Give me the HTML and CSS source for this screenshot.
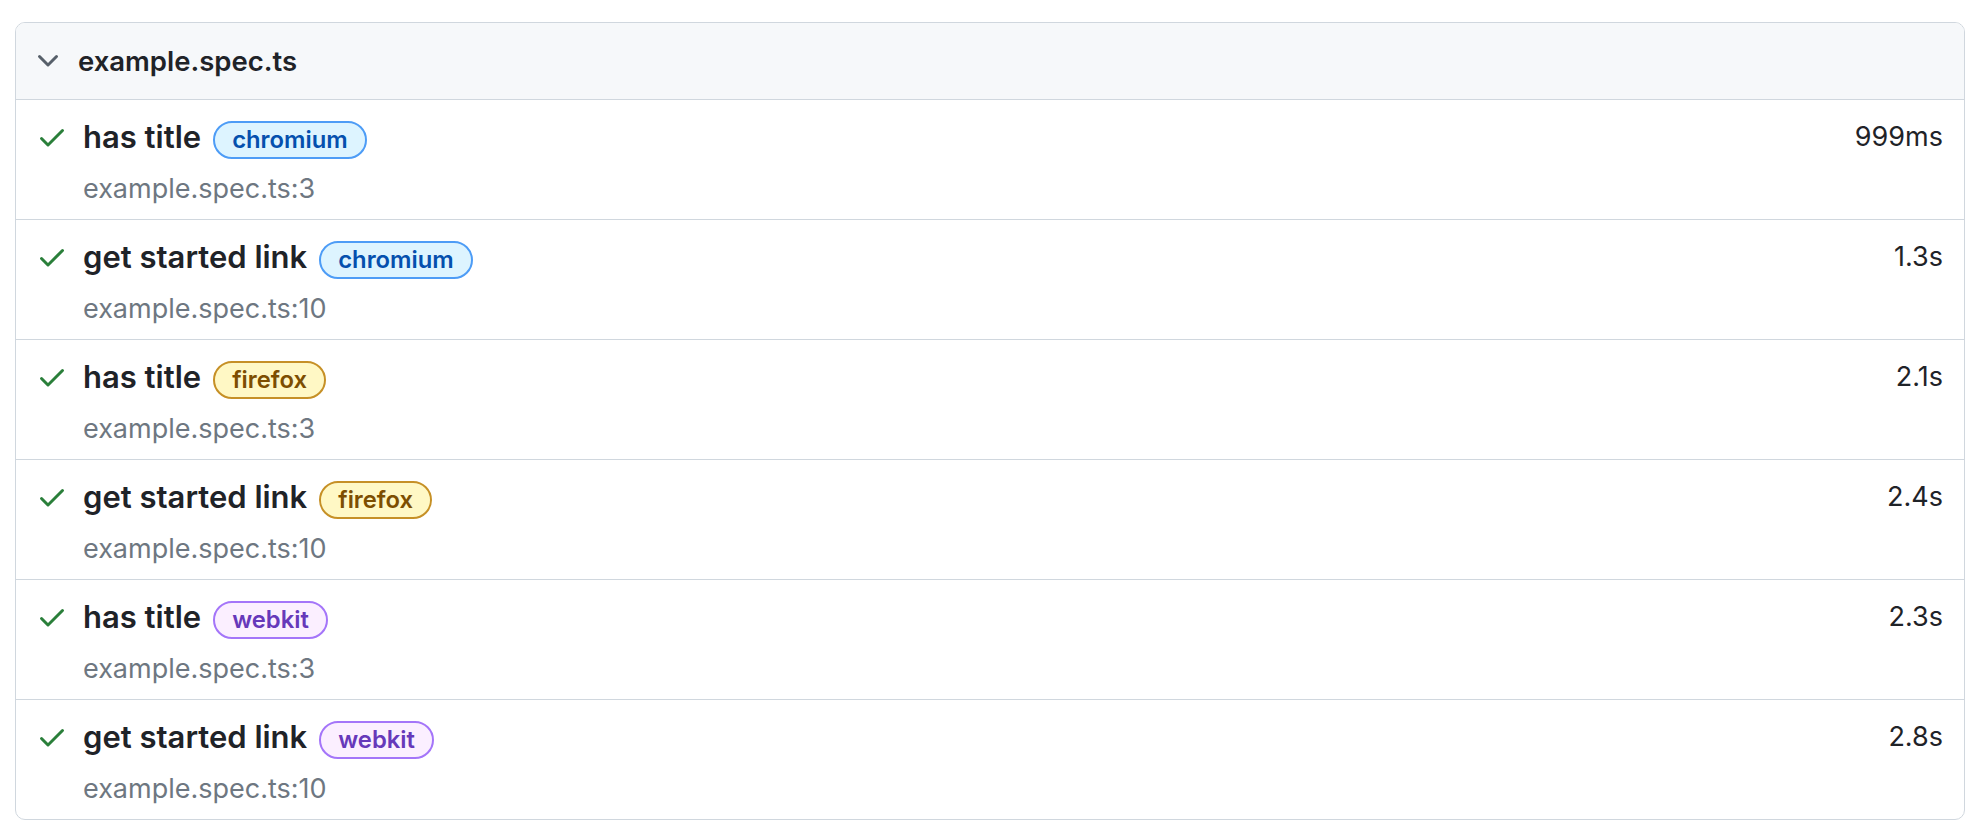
FILE: index.html
```html
<!DOCTYPE html>
<html>
<head>
<meta charset="utf-8">
<link rel="stylesheet" href="styles.css">
</head>
<body>
<div class="card">
  <div class="card-header">
    <svg class="chevron" viewBox="0 0 16 16" width="32" height="32"><path d="M12.78 5.22a.749.749 0 0 1 0 1.06l-4.25 4.25a.749.749 0 0 1-1.06 0L3.22 6.28a.749.749 0 1 1 1.06-1.06L8 8.939l3.72-3.719a.749.749 0 0 1 1.06 0Z"/></svg>
    <span class="file-name">example.spec.ts</span>
  </div>

  <div class="test-row">
    <svg class="check" viewBox="0 0 16 16" width="32" height="32"><path d="M13.78 4.22a.75.75 0 0 1 0 1.06l-7.25 7.25a.75.75 0 0 1-1.06 0L2.22 9.28a.751.751 0 0 1 .018-1.042.751.751 0 0 1 1.042-.018L6 10.94l6.72-6.72a.75.75 0 0 1 1.06 0Z"/></svg>
    <div class="test-main">
      <div class="test-line"><span class="test-title">has title</span><span class="label label-blue">chromium</span></div>
      <div class="test-location">example.spec.ts:3</div>
    </div>
    <div class="test-duration">999ms</div>
  </div>

  <div class="test-row">
    <svg class="check" viewBox="0 0 16 16" width="32" height="32"><path d="M13.78 4.22a.75.75 0 0 1 0 1.06l-7.25 7.25a.75.75 0 0 1-1.06 0L2.22 9.28a.751.751 0 0 1 .018-1.042.751.751 0 0 1 1.042-.018L6 10.94l6.72-6.72a.75.75 0 0 1 1.06 0Z"/></svg>
    <div class="test-main">
      <div class="test-line"><span class="test-title">get started link</span><span class="label label-blue">chromium</span></div>
      <div class="test-location">example.spec.ts:10</div>
    </div>
    <div class="test-duration">1.3s</div>
  </div>

  <div class="test-row">
    <svg class="check" viewBox="0 0 16 16" width="32" height="32"><path d="M13.78 4.22a.75.75 0 0 1 0 1.06l-7.25 7.25a.75.75 0 0 1-1.06 0L2.22 9.28a.751.751 0 0 1 .018-1.042.751.751 0 0 1 1.042-.018L6 10.94l6.72-6.72a.75.75 0 0 1 1.06 0Z"/></svg>
    <div class="test-main">
      <div class="test-line"><span class="test-title">has title</span><span class="label label-yellow">firefox</span></div>
      <div class="test-location">example.spec.ts:3</div>
    </div>
    <div class="test-duration">2.1s</div>
  </div>

  <div class="test-row">
    <svg class="check" viewBox="0 0 16 16" width="32" height="32"><path d="M13.78 4.22a.75.75 0 0 1 0 1.06l-7.25 7.25a.75.75 0 0 1-1.06 0L2.22 9.28a.751.751 0 0 1 .018-1.042.751.751 0 0 1 1.042-.018L6 10.94l6.72-6.72a.75.75 0 0 1 1.06 0Z"/></svg>
    <div class="test-main">
      <div class="test-line"><span class="test-title">get started link</span><span class="label label-yellow">firefox</span></div>
      <div class="test-location">example.spec.ts:10</div>
    </div>
    <div class="test-duration">2.4s</div>
  </div>

  <div class="test-row">
    <svg class="check" viewBox="0 0 16 16" width="32" height="32"><path d="M13.78 4.22a.75.75 0 0 1 0 1.06l-7.25 7.25a.75.75 0 0 1-1.06 0L2.22 9.28a.751.751 0 0 1 .018-1.042.751.751 0 0 1 1.042-.018L6 10.94l6.72-6.72a.75.75 0 0 1 1.06 0Z"/></svg>
    <div class="test-main">
      <div class="test-line"><span class="test-title">has title</span><span class="label label-purple">webkit</span></div>
      <div class="test-location">example.spec.ts:3</div>
    </div>
    <div class="test-duration">2.3s</div>
  </div>

  <div class="test-row">
    <svg class="check" viewBox="0 0 16 16" width="32" height="32"><path d="M13.78 4.22a.75.75 0 0 1 0 1.06l-7.25 7.25a.75.75 0 0 1-1.06 0L2.22 9.28a.751.751 0 0 1 .018-1.042.751.751 0 0 1 1.042-.018L6 10.94l6.72-6.72a.75.75 0 0 1 1.06 0Z"/></svg>
    <div class="test-main">
      <div class="test-line"><span class="test-title">get started link</span><span class="label label-purple">webkit</span></div>
      <div class="test-location">example.spec.ts:10</div>
    </div>
    <div class="test-duration">2.8s</div>
  </div>
</div>
</body>
</html>
```
FILE: styles.css
```css
html, body {
  background: #ffffff;
}
body {
  margin: 22px 15px 0;
  font-family: Inter, "Noto Sans", "Liberation Sans", sans-serif;
  color: #1f2328;
}
.card {
  border: 1px solid #d0d7de;
  border-radius: 10px;
  overflow: hidden;
}
.card-header {
  display: flex;
  align-items: center;
  height: 76px;
  padding-left: 16px;
  background: #f6f8fa;
  border-bottom: 1px solid #d0d7de;
}
.chevron {
  fill: #57606a;
  flex: none;
  margin-right: 14px;
}
.file-name {
  font-size: 27.5px;
  font-weight: 600;
  line-height: 34px;
  color: #1f2328;
}
.test-row {
  display: flex;
  align-items: flex-start;
  box-sizing: border-box;
  height: 120px;
  padding: 18px 21px 0 20px;
  border-bottom: 1px solid #d0d7de;
}
.test-row:last-child {
  border-bottom: none;
  height: 119px;
}
.check {
  flex: none;
  fill: #2a7f3a;
  margin-top: 3px;
  margin-right: 15px;
}
.test-main {
  flex: 1;
  min-width: 0;
}
.test-line {
  display: flex;
  align-items: baseline;
  gap: 12px;
}
.test-title {
  font-size: 31px;
  font-weight: 600;
  line-height: 38px;
  color: #1f2328;
}
.label {
  display: inline-block;
  box-sizing: border-box;
  height: 38px;
  padding: 0 17px;
  border: 2px solid;
  border-radius: 19px;
  font-size: 23.8px;
  font-weight: 600;
  line-height: 34px;
}
.label-blue {
  background: #ddf4ff;
  border-color: #4d9cf6;
  color: #0550ae;
}
.label-yellow {
  background: #fff8c5;
  border-color: #c69026;
  color: #7d4e00;
}
.label-purple {
  background: #fbefff;
  border-color: #a475f9;
  color: #6639ba;
}
.test-location {
  margin-top: 14px;
  font-size: 27px;
  line-height: 32px;
  color: #6e7781;
}
.test-duration {
  flex: none;
  font-size: 27px;
  line-height: 38px;
  color: #1f2328;
}
```
